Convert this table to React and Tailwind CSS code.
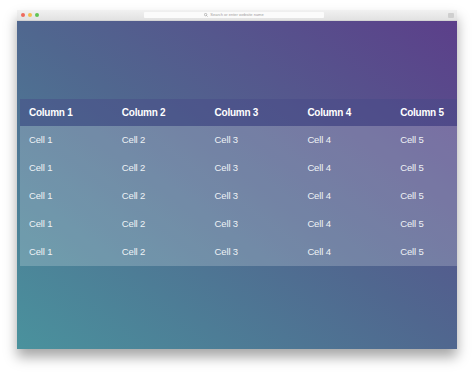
import React from "react";

const columns = ["Column 1", "Column 2", "Column 3", "Column 4", "Column 5"];
const rows = [1, 2, 3, 4, 5];

const BrowserBar = () => (
  <div className="relative flex h-[11px] items-center bg-gradient-to-b from-[#f1f1f1] to-[#e2e2e2] border-b border-[#d4d4d4]">
    <div className="ml-[4px] flex gap-[3px]">
      <span className="h-[4px] w-[4px] rounded-full bg-[#ee6a5e]" />
      <span className="h-[4px] w-[4px] rounded-full bg-[#f5bf4f]" />
      <span className="h-[4px] w-[4px] rounded-full bg-[#61c454]" />
    </div>
    <div className="ml-[105px] flex h-[6px] w-[180px] items-center justify-center rounded-[1px] bg-[#fbfbfb]">
      <svg width="4" height="4" viewBox="0 0 10 10" className="mr-[2px]">
        <circle cx="4" cy="4" r="3" fill="none" stroke="#999" strokeWidth="1.5" />
        <path d="M6 6l3 3" stroke="#999" strokeWidth="1.5" />
      </svg>
      <span className="text-[4px] leading-none text-[#a0a0a0]">Search or enter website name</span>
    </div>
    <div className="ml-auto mr-[3px] h-[5px] w-[6px] rounded-[1px] bg-[#cfcfcf]" />
  </div>
);

export default function App() {
  return (
    <div
      className="h-[373px] w-[474px] bg-white pt-[10px] pl-[17px]"
      style={{ fontFamily: '"Liberation Sans", Arial, sans-serif' }}
    >
      <div className="w-[440px] shadow-[0_8px_12px_rgba(0,0,0,0.35)]">
        <BrowserBar />
        <div className="h-[328px] overflow-hidden bg-[linear-gradient(to_top_right,#4a929d,#50678f_50%,#5c3f8a)] pt-[78px] pl-[3px]">
          <div className="w-[464px]">
            <div className="grid h-[27px] grid-cols-5 items-center bg-[rgba(72,74,135,0.45)]">
              {columns.map((c) => (
                <div key={c} className="pl-[9px] text-[10px] font-bold tracking-[-0.25px] text-white">
                  {c}
                </div>
              ))}
            </div>
            <div className="bg-[rgba(255,255,255,0.2)]">
              {rows.map((r) => (
                <div key={r} className="grid h-[28px] grid-cols-5 items-center">
                  {columns.map((c, i) => (
                    <div key={c} className="pl-[9px] text-[9.5px] tracking-[-0.15px] text-[#eef2f6]">
                      Cell {i + 1}
                    </div>
                  ))}
                </div>
              ))}
            </div>
          </div>
        </div>
      </div>
    </div>
  );
}
